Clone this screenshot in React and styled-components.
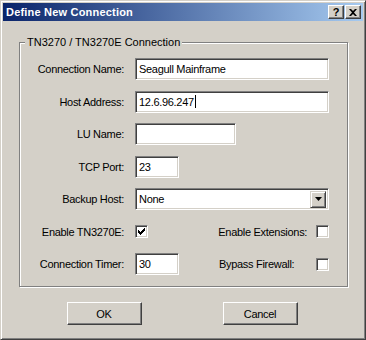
import React from "react";
import styled, { createGlobalStyle } from "styled-components";

const GlobalStyle = createGlobalStyle`
  html, body { margin: 0; padding: 0; background: #ffffff; }
  body {
    font-family: "Liberation Sans", Arial, sans-serif;
    font-size: 11px;
    letter-spacing: -0.3px;
    color: #000;
  }
  * { box-sizing: border-box; }
`;

const Window = styled.div`
  width: 366px;
  height: 340px;
  background: #d4d0c8;
  border: 1px solid;
  border-color: #d4d0c8 #404040 #404040 #d4d0c8;
  box-shadow: inset 1px 1px #ffffff, inset -1px -1px #808080;
  padding: 2px;
  display: flex;
  flex-direction: column;
`;

const TitleBar = styled.div`
  height: 18px;
  display: flex;
  align-items: center;
  padding: 0 2px 0 3px;
  background: linear-gradient(to right, #0a246a, #a6caf0);
`;

const Title = styled.span`
  flex: 1;
  color: #ffffff;
  font-weight: bold;
  font-size: 11px;
  letter-spacing: 0.2px;
`;

const CaptionButtons = styled.div`
  display: flex;
  gap: 1px;
`;

const CaptionButton = styled.div`
  width: 16px;
  height: 14px;
  background: #d4d0c8;
  border: 1px solid;
  border-color: #ffffff #404040 #404040 #ffffff;
  box-shadow: inset -1px -1px #808080;
  display: flex;
  align-items: center;
  justify-content: center;
  font-weight: bold;
  font-size: 11px;
  line-height: 1;
`;

const Body = styled.div`
  flex: 1;
  padding: 21px 15px 0 16px;
  display: flex;
  flex-direction: column;
`;

const GroupBox = styled.div`
  position: relative;
  border: 1px solid #808080;
  box-shadow: inset 1px 1px #ffffff, 1px 1px #ffffff;
  padding: 15px 0 11px 0;
`;

const Legend = styled.span`
  position: absolute;
  top: -7px;
  left: 5px;
  padding: 0 2px;
  background: #d4d0c8;
  line-height: 13px;
  letter-spacing: 0;
`;

const Form = styled.div`
  display: grid;
  grid-template-columns: 104px 194px;
  grid-auto-rows: 22px;
  column-gap: 11px;
  row-gap: 10.5px;
`;

const Label = styled.div`
  align-self: center;
  text-align: right;
  white-space: nowrap;
`;

const Field = styled.div`
  display: flex;
  align-items: center;
`;

const sunken = `
  border: 1px solid;
  border-color: #808080 #ffffff #ffffff #808080;
  box-shadow: inset 1px 1px #404040, inset -1px -1px #d4d0c8;
  background: #ffffff;
`;

const TextBox = styled.div`
  ${sunken}
  width: ${(p) => p.$width}px;
  height: 22px;
  display: flex;
  align-items: center;
  padding-left: 3px;
  white-space: nowrap;
`;

const Caret = styled.span`
  display: inline-block;
  width: 1px;
  height: 13px;
  background: #000;
  margin-left: 1px;
`;

const Select = styled.div`
  ${sunken}
  width: 194px;
  height: 22px;
  display: flex;
  align-items: center;
  padding: 2px 2px 2px 3px;
`;

const SelectValue = styled.span`
  flex: 1;
`;

const DropButton = styled.div`
  width: 16px;
  height: 17px;
  background: #d4d0c8;
  border: 1px solid;
  border-color: #d4d0c8 #404040 #404040 #d4d0c8;
  box-shadow: inset 1px 1px #ffffff, inset -1px -1px #808080;
  display: flex;
  align-items: center;
  justify-content: center;
`;

const CheckBox = styled.div`
  ${sunken}
  width: 13px;
  height: 13px;
  display: flex;
  align-items: center;
  justify-content: center;
`;

const LeftSlot = styled.div`
  width: 84px;
  display: flex;
  align-items: center;
`;

const SideLabel = styled.span`
  flex: 1;
  margin-right: 9px;
  white-space: nowrap;
`;

const ButtonRow = styled.div`
  display: flex;
  justify-content: center;
  gap: 81px;
  margin-top: 15px;
  padding-right: 3px;
`;

const Button = styled.div`
  width: 75px;
  height: 23px;
  background: #d4d0c8;
  border: 1px solid;
  border-color: #ffffff #404040 #404040 #ffffff;
  box-shadow: inset -1px -1px #808080;
  display: flex;
  align-items: center;
  justify-content: center;
`;

const Check = () => (
  <svg width="7" height="7" viewBox="0 0 7 7">
    <path d="M0 2h1v1h1v1h1V3h1V2h1V1h1V0h1v3h-1v1h-1v1h-1v1h-1v1h-1V6H1V5H0z" fill="#000" />
  </svg>
);

const Close = () => (
  <svg width="8" height="7" viewBox="0 0 8 7">
    <path d="M0 0h2l2 2 2-2h2L5 3.5 8 7H6L4 5 2 7H0l3-3.5z" fill="#000" />
  </svg>
);

const Arrow = () => (
  <svg width="7" height="4" viewBox="0 0 7 4">
    <path d="M0 0h7L3.5 4z" fill="#000" />
  </svg>
);

export default function App() {
  return (
    <>
      <GlobalStyle />
      <Window>
        <TitleBar>
          <Title>Define New Connection</Title>
          <CaptionButtons>
            <CaptionButton>?</CaptionButton>
            <CaptionButton>
              <Close />
            </CaptionButton>
          </CaptionButtons>
        </TitleBar>
        <Body>
          <GroupBox>
            <Legend>TN3270 / TN3270E Connection</Legend>
            <Form>
              <Label>Connection Name:</Label>
              <Field>
                <TextBox $width={194}>Seagull Mainframe</TextBox>
              </Field>

              <Label>Host Address:</Label>
              <Field>
                <TextBox $width={194}>
                  12.6.96.247
                  <Caret />
                </TextBox>
              </Field>

              <Label>LU Name:</Label>
              <Field>
                <TextBox $width={101} />
              </Field>

              <Label>TCP Port:</Label>
              <Field>
                <TextBox $width={44}>23</TextBox>
              </Field>

              <Label>Backup Host:</Label>
              <Field>
                <Select>
                  <SelectValue>None</SelectValue>
                  <DropButton>
                    <Arrow />
                  </DropButton>
                </Select>
              </Field>

              <Label>Enable TN3270E:</Label>
              <Field>
                <LeftSlot>
                  <CheckBox>
                    <Check />
                  </CheckBox>
                </LeftSlot>
                <SideLabel>Enable Extensions:</SideLabel>
                <CheckBox />
              </Field>

              <Label>Connection Timer:</Label>
              <Field>
                <LeftSlot>
                  <TextBox $width={44}>30</TextBox>
                </LeftSlot>
                <SideLabel>Bypass Firewall:</SideLabel>
                <CheckBox />
              </Field>
            </Form>
          </GroupBox>
          <ButtonRow>
            <Button>OK</Button>
            <Button>Cancel</Button>
          </ButtonRow>
        </Body>
      </Window>
    </>
  );
}
